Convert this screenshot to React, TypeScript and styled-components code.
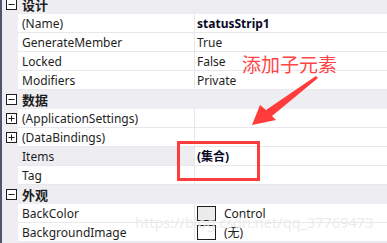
import React from "react";
import styled, { createGlobalStyle } from "styled-components";

const Global = createGlobalStyle`
  html, body {
    margin: 0;
    padding: 0;
    background: #eeeef2;
    overflow: hidden;
  }
`;

type Prop = {
  name: string;
  value?: string;
  bold?: boolean;
  expand?: boolean;
  selected?: boolean;
  swatch?: string;
};

type Section = { title: string; props: Prop[] };

const sections: Section[] = [
  {
    title: "设计",
    props: [
      { name: "(Name)", value: "statusStrip1", bold: true },
      { name: "GenerateMember", value: "True" },
      { name: "Locked", value: "False" },
      { name: "Modifiers", value: "Private" },
    ],
  },
  {
    title: "数据",
    props: [
      { name: "(ApplicationSettings)", expand: true },
      { name: "(DataBindings)", expand: true },
      { name: "Items", value: "(集合)", bold: true, selected: true },
      { name: "Tag" },
    ],
  },
  {
    title: "外观",
    props: [
      { name: "BackColor", value: "Control", swatch: "#ececec" },
      { name: "BackgroundImage", value: "(无)", swatch: "#ffffff" },
    ],
  },
];

const Toggle = ({ open }: { open: boolean }) => (
  <svg width="11" height="11" viewBox="0 0 11 11">
    <rect x="0.5" y="0.5" width="10" height="10" fill="#fff" stroke="#1e1e1e" />
    <line x1="2.5" y1="5.5" x2="8.5" y2="5.5" stroke="#1e1e1e" />
    {!open && <line x1="5.5" y1="2.5" x2="5.5" y2="8.5" stroke="#1e1e1e" />}
  </svg>
);

const App = () => (
  <>
    <Global />
    <Frame>
      <Grid>
        {sections.map((s) => (
          <React.Fragment key={s.title}>
            <Gutter>
              <Toggle open />
            </Gutter>
            <Header>{s.title}</Header>
            {s.props.map((p) => (
              <React.Fragment key={p.name}>
                <Gutter>{p.expand && <Toggle open={false} />}</Gutter>
                <Name $selected={p.selected}>{p.name}</Name>
                <Value $bold={p.bold}>
                  {p.swatch && <Swatch $color={p.swatch} />}
                  {p.value}
                </Value>
              </React.Fragment>
            ))}
          </React.Fragment>
        ))}
      </Grid>

      {/* annotation drawn over the grid */}
      <Note>添加子元素</Note>
      <Arrow width="80" height="60" viewBox="0 0 80 60">
        <polygon points="64,0 66,2 20,40 24,44 0,49 8,29 14,34" fill="#ff3b3b" />
      </Arrow>
      <Highlight />
      <Watermark>https://blog.csdn.net/qq_37769473</Watermark>
    </Frame>
  </>
);

export default App;

const Frame = styled.div`
  position: relative;
  width: 387px;
  height: 243px;
  overflow: hidden;
  background: #eeeef2;
  border-left: 2px solid #50556f;
  box-sizing: border-box;
  font-family: "Noto Sans", "Noto Sans CJK SC", sans-serif;
  font-size: 12px;
  color: #1e1e1e;
`;

const Grid = styled.div`
  display: grid;
  grid-template-columns: 16px 177px 1fr;
  grid-auto-rows: 19px;
  margin-top: -5px;
`;

const Gutter = styled.div`
  display: flex;
  align-items: center;
  padding-left: 4px;
`;

const Header = styled.div`
  grid-column: span 2;
  display: flex;
  align-items: center;
  padding-left: 4px;
  font-family: "Noto Sans CJK SC", sans-serif;
  font-weight: 700;
  font-size: 13px;
`;

const Name = styled.div<{ $selected?: boolean }>`
  display: flex;
  align-items: center;
  padding-left: 4px;
  background: ${(p) => (p.$selected ? "#eeeef2" : "#ffffff")};
  border-bottom: 1px solid #e8e8ec;
  border-right: 1px solid #e8e8ec;
  white-space: nowrap;
`;

const Value = styled.div<{ $bold?: boolean }>`
  display: flex;
  align-items: center;
  gap: 8px;
  padding-left: 2px;
  background: #ffffff;
  border-bottom: 1px solid #e8e8ec;
  font-weight: ${(p) => (p.$bold ? 700 : 400)};
  color: ${(p) => (p.$bold ? "#0a0a28" : "#1e1e1e")};
  white-space: nowrap;
`;

const Swatch = styled.span<{ $color: string }>`
  width: 19px;
  height: 15px;
  box-sizing: border-box;
  border: 1px solid #1e1e1e;
  background: ${(p) => p.$color};
`;

const Note = styled.div`
  position: absolute;
  left: 240px;
  top: 50px;
  font-family: "Noto Sans CJK SC", sans-serif;
  font-size: 19px;
  color: #ff4646;
`;

const Arrow = styled.svg`
  position: absolute;
  left: 250px;
  top: 76px;
`;

const Highlight = styled.div`
  position: absolute;
  left: 175px;
  top: 141px;
  width: 83px;
  height: 40px;
  box-sizing: border-box;
  border: 3px solid #ff3b3b;
`;

const Watermark = styled.div`
  position: absolute;
  left: 133px;
  top: 212px;
  font-family: "Noto Sans", sans-serif;
  font-size: 14.5px;
  color: rgba(215, 215, 215, 0.5);
  text-shadow: 0 0 1px rgba(255, 255, 255, 0.8);
  white-space: nowrap;
`;
